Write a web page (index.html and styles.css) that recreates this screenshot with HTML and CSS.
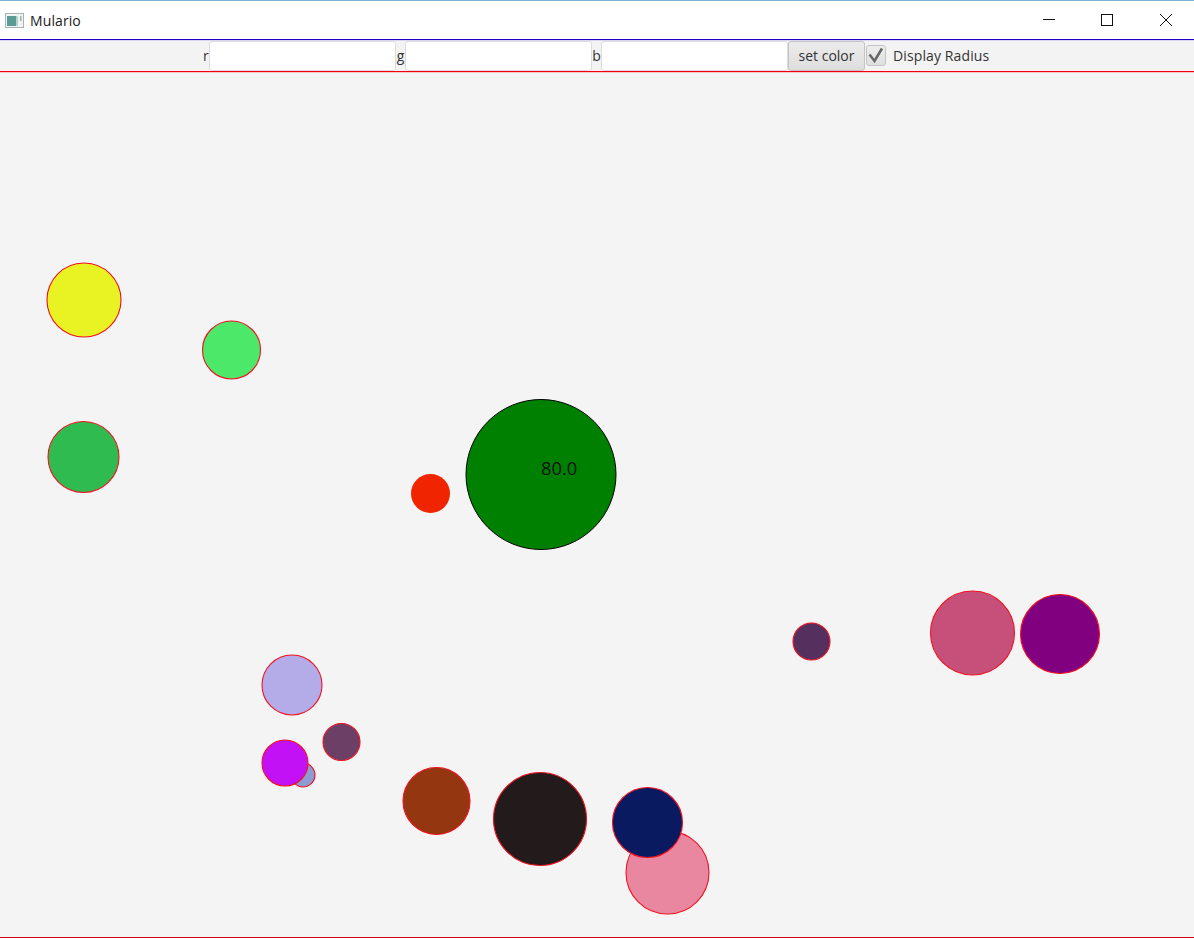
FILE: index.html
```html
<!DOCTYPE html>
<html lang="en">
<head>
<meta charset="utf-8">
<title>Mulario</title>
<link rel="stylesheet" href="styles.css">
</head>
<body>
<div class="window">
  <header class="titlebar">
    <svg class="app-icon" width="19" height="15" viewBox="0 0 19 15">
      <rect x="0.500" y="0.500" width="18" height="14" fill="#f2f4f4" stroke="#a9b2b4"/>
      <rect x="2" y="3" width="9" height="10" fill="#5a9c94"/>
      <rect x="11" y="3" width="2" height="10" fill="#b5d2cf"/>
      <rect x="15" y="3" width="1.500" height="5" fill="#9ab2b2"/>
    </svg>
    <span class="title">Mulario</span>
    <div class="controls">
      <span class="control">
        <svg width="14" height="14" viewBox="0 0 14 14"><path d="M1 6.500H13" stroke="#111" fill="none"/></svg>
      </span>
      <span class="control">
        <svg width="14" height="14" viewBox="0 0 14 14"><rect x="1.500" y="1.500" width="11" height="11" stroke="#111" fill="none"/></svg>
      </span>
      <span class="control">
        <svg width="14" height="14" viewBox="0 0 14 14"><path d="M1 1L13 13M13 1L1 13" stroke="#111" fill="none"/></svg>
      </span>
    </div>
  </header>
  <div class="toolbar">
    <label class="field-label">r</label><input class="field" type="text">
    <label class="field-label">g</label><input class="field" type="text">
    <label class="field-label">b</label><input class="field" type="text">
    <button class="set-color" type="button">set color</button>
    <span class="check">
      <svg width="16" height="16" viewBox="0 0 16 16"><path d="M1.500 7.500L6.500 14L14 1.500" stroke="#666" stroke-width="2.500" fill="none"/></svg>
    </span>
    <span class="check-label">Display Radius</span>
  </div>
  <main class="canvas">
    <svg class="board" width="1194" height="865" viewBox="0 72 1194 865">
      <g class="cell">
        <circle cx="84" cy="300" r="37" fill="#e9f223"/>
        <circle cx="231.500" cy="350" r="29" fill="#4ce86a"/>
        <circle cx="83.500" cy="457" r="35.500" fill="#2fbb4f"/>
        <circle cx="811.500" cy="641.500" r="18.500" fill="#55305e"/>
        <circle cx="972.500" cy="633" r="42" fill="#c7507a"/>
        <circle cx="1060" cy="634" r="39.500" fill="#800080"/>
        <circle cx="292" cy="685" r="30" fill="#b3ace8"/>
        <circle cx="341.500" cy="742" r="18.500" fill="#6b3f66"/>
        <circle cx="303" cy="775" r="12" fill="#8d9bd3"/>
        <circle cx="285" cy="763" r="23" fill="#c311f5"/>
        <circle cx="436.500" cy="801" r="33.500" fill="#94360f"/>
        <circle cx="540" cy="819" r="46.500" fill="#231a1c"/>
        <circle cx="667.500" cy="872.500" r="41.500" fill="#e8879f"/>
        <circle cx="647.500" cy="822.500" r="35" fill="#0a1a60"/>
      </g>
      <circle class="food" cx="430.500" cy="493.500" r="19.500"/>
      <circle class="player" cx="541" cy="474.500" r="75"/>
      <text class="radius" x="541" y="475">80.0</text>
    </svg>
  </main>
</div>
</body>
</html>
```
FILE: styles.css
```css
* { box-sizing: border-box; }
html, body { margin: 0; padding: 0; }
body {
  width: 1194px;
  height: 938px;
  overflow: hidden;
  background: #f4f4f4;
  font-family: "Open Sans", "Noto Sans", sans-serif;
}
.window { display: flex; flex-direction: column; height: 938px; }
.titlebar {
  display: flex;
  align-items: center;
  height: 40px;
  padding-left: 5px;
  background: #fff;
  border-top: 1px solid #7fb5cf;
  border-bottom: 1px solid #2000c8;
}
.app-icon { flex: none; }
.title { margin-left: 6px; font-size: 14px; letter-spacing: 0.1px; color: #1a1a1a; }
.controls { display: flex; margin-left: auto; margin-right: -1px; }
.control {
  display: flex;
  align-items: center;
  justify-content: center;
  width: 58.500px;
  height: 38px;
}
.toolbar {
  position: relative;
  display: flex;
  align-items: center;
  height: 32px;
  padding-left: 203px;
  background: #f3f3f3;
  border-top: 1px solid #d8d4f4;
  border-bottom: 1px solid #f00010;
  box-shadow: 0 1px 0 #f8c4c8;
  font-size: 14px;
  color: #333;
}
.field-label { width: 6px; line-height: 30px; font-size: 14px; }
.field {
  width: 187px;
  height: 30px;
  margin: 0;
  padding: 0 6px;
  background: #fff;
  border: 1px solid #dcdcdc;
  border-radius: 3px;
}
.field + .field-label { width: 9px; text-align: center; }
.set-color {
  width: 77px;
  height: 30px;
  margin: 0;
  padding: 0 0 2px;
  font: inherit;
  color: #333;
  background: linear-gradient(#ececec, #dedede);
  border: 1px solid #c4c4c4;
  border-radius: 3px;
}
.check {
  display: flex;
  align-items: center;
  justify-content: center;
  width: 20px;
  height: 21px;
  margin-left: 1px;
  margin-bottom: 2px;
  background: linear-gradient(#eee, #dfdfdf);
  border: 1px solid #c4c4c4;
  border-radius: 3px;
}
.check-label { margin-left: 7px; margin-bottom: 2px; letter-spacing: 0.12px; }
.canvas {
  flex: 1;
  background: #f4f4f4;
  border-bottom: 1px solid #d00010;
}
.board { display: block; }
.cell circle { stroke: #f2101e; stroke-width: 1.100; }
.food { fill: #f02500; }
.player { fill: #008000; stroke: #000; }
.radius { font-size: 18.300px; fill: #111; }
```
